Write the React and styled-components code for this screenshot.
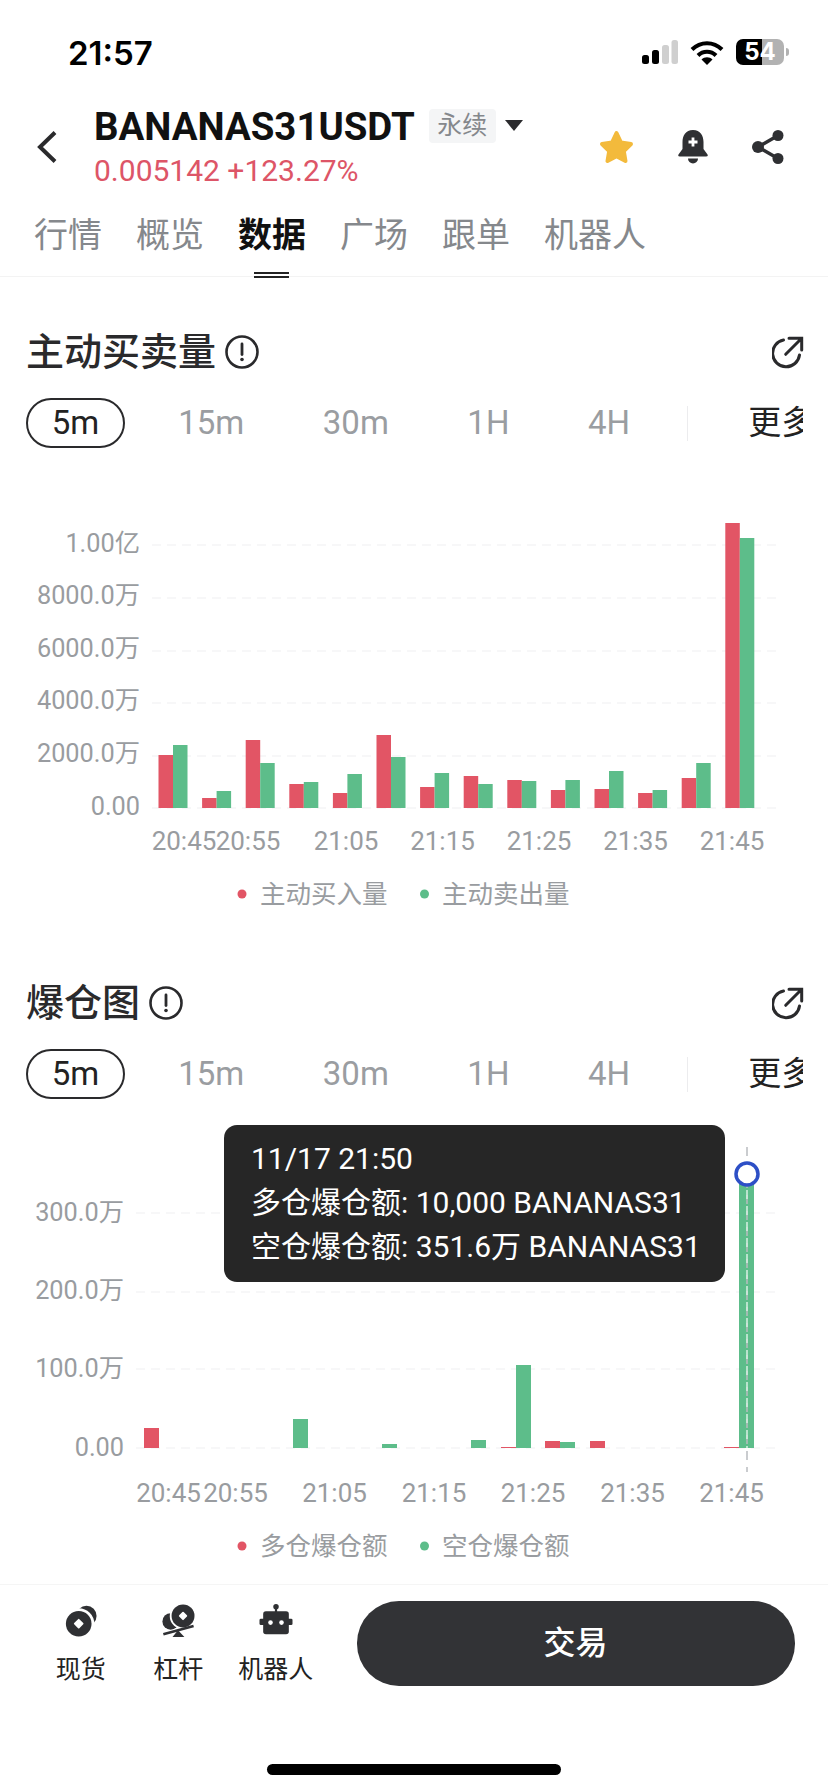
import React from 'react';
import styled, { createGlobalStyle } from 'styled-components';

const GlobalStyle = createGlobalStyle`
html, body {
  margin: 0;
  padding: 0;
  background: #fff;
  font-family: Roboto, "Noto Sans CJK SC", sans-serif;
}
`

const RED = '#e25565';
const GREEN = '#5dbd8a';

const Page = styled.div`
width: 828px;
height: 1792px;
overflow: hidden;
background: #fff;
`

const StatusBar = styled.div`
height: 104px;
display: flex;
align-items: center;
padding: 0 44px 0 68px;
box-sizing: border-box;
`

const Time = styled.div`
font-size: 33px;
font-weight: 600;
font-family: Inter, Roboto, sans-serif;
color: #000;
margin: 2px auto 0 0;
`

const StatusIcons = styled.div`
display: flex;
align-items: center;
gap: 12px;
`

const Battery = styled.div`
position: relative;
width: 48px;
height: 26px;
border-radius: 7px;
background: linear-gradient(90deg, #000 54%, #b2b2b2 54%);
color: #fff;
font: 700 24px/26px Inter, Roboto, sans-serif;
text-align: center;
&::after {
  content: "";
  position: absolute;
  right: -5px;
  top: 9px;
  width: 3px;
  height: 8px;
  border-radius: 0 3px 3px 0;
  background: #b2b2b2;
}
`

const Header = styled.div`
height: 104px;
display: flex;
align-items: flex-start;
padding: 0 44px 0 37px;
box-sizing: border-box;
`

const BackIcon = styled.svg`
margin: 27px 37px 0 0;
flex: none;
`

const TitleBlock = styled.div`
display: flex;
flex-direction: column;
`

const TitleRow = styled.div`
display: flex;
align-items: center;
height: 44px;
`

const Symbol = styled.div`
margin-top: 2px;
font-size: 38.4px;
font-weight: 700;
color: #111;
line-height: 44px;
`

const Tag = styled.div`
margin-left: 14px;
width: 67px;
height: 34px;
background: #f4f5f6;
border-radius: 4px;
color: #85888c;
font-size: 25px;
line-height: 34px;
text-align: center;
`

const Caret = styled.div`
margin: -2px 0 0 9px;
width: 0;
height: 0;
border-left: 9px solid transparent;
border-right: 9px solid transparent;
border-top: 11px solid #2b2b2e;
`

const Price = styled.div`
font-size: 30px;
line-height: 46px;
color: #dd5567;
`

const Actions = styled.div`
margin: 26px 0 0 auto;
display: flex;
align-items: center;
gap: 44px;
`

const Tabs = styled.div`
height: 68px;
display: flex;
gap: 34px;
padding-left: 34px;
box-sizing: content-box;
border-bottom: 1px solid #f3f3f3;
`

const Tab = styled.div`
position: relative;
height: 68px;
font-size: 34px;
line-height: 55px;
color: ${p => (p.$active ? '#111' : '#85888c')};
font-weight: ${p => (p.$active ? 700 : 400)};
&::after {
  content: "";
  display: ${p => (p.$active ? 'block' : 'none')};
  position: absolute;
  left: 16px;
  top: 64px;
  width: 35px;
  height: 2px;
  border-top: 2px solid #222;
  border-bottom: 2px solid #222;
}
`

const Section = styled.section`
height: ${p => p.$height}px;
box-sizing: border-box;
padding-top: 50px;
`

const SectionHead = styled.div`
height: 50px;
display: flex;
align-items: center;
padding: 0 24px 0 26px;
`

const SectionTitle = styled.h2`
margin: 0 9px 0 0;
font-size: 38px;
font-weight: 500;
line-height: 50px;
color: #2a2a2c;
`

const OpenIcon = styled.svg`
margin-left: auto;
`

const Periods = styled.div`
margin: 21px 25px 0 26px;
height: 50px;
display: flex;
align-items: center;
overflow: hidden;
`

const PeriodPill = styled.div`
flex: none;
width: 99px;
height: 50px;
box-sizing: border-box;
border: 2px solid #2a2a2c;
border-radius: 25px;
margin-right: 14px;
font-size: 33px;
line-height: 46px;
text-align: center;
color: #222;
`

const Period = styled.div`
flex: none;
padding: 0 39.25px;
font-size: 33px;
line-height: 50px;
color: #9a9da1;
`

const PeriodDivider = styled.div`
flex: none;
width: 1px;
height: 35px;
margin-left: 18px;
background: #ececee;
`

const PeriodMore = styled.div`
flex: none;
margin-left: 60px;
font-size: 33px;
line-height: 50px;
color: #222;
`

const ChartWrap = styled.div`
position: relative;
margin-top: 33px;
`

const ChartSvg = styled.svg`
display: block;
`

const AxisText = styled.text`
font-size: ${p => p.$size}px;
fill: #999ca0;
`

const Tooltip = styled.div`
position: absolute;
left: 224px;
top: -7px;
width: 501px;
height: 157px;
box-sizing: border-box;
padding: 12px 0 0 27px;
border-radius: 13px;
background: #262626;
color: #fff;
font-size: 30px;
line-height: 44px;
white-space: nowrap;
`

const BottomBar = styled.div`
height: 102px;
box-sizing: border-box;
padding: 16px 0 0 32px;
display: flex;
border-top: 1px solid #f5f5f5;
`

const NavItem = styled.div`
width: 97.5px;
display: flex;
flex-direction: column;
align-items: center;
padding-top: 3px;
`

const NavIcon = styled.svg`
display: block;
`

const NavLabel = styled.div`
margin-top: 17px;
font-size: 25px;
line-height: 32px;
color: #222;
white-space: nowrap;
`

const TradeButton = styled.div`
margin-left: 32px;
width: 438px;
height: 85px;
border-radius: 42px;
background: #323336;
color: #fff;
font-size: 32px;
font-weight: 500;
line-height: 85px;
text-align: center;
`

const HomeBar = styled.div`
width: 294px;
height: 11px;
margin: 78px auto 0;
border-radius: 6px;
background: #000;
`

// page y of each bar top, [red, green]
const flowBars = [
  [754, 744], [797, 790], [739, 762], [783, 781], [792, 773], [734, 756], [786, 772],
  [775, 783], [779, 780], [789, 779], [788, 770], [792, 789], [777, 762], [522, 537],
];
const flowTicks = [
  ['1.00亿', 542, 544], ['8000.0万', 594, 597], ['6000.0万', 647, 650],
  ['4000.0万', 699, 702], ['2000.0万', 752, 755], ['0.00', 805, 807],
];
const flowTimes = [[184, '20:45'], [248, '20:55'], [346, '21:05'], [442.5, '21:15'], [539, '21:25'], [635.5, '21:35'], [732, '21:45']];

const liqBars = [
  [144, 1428, RED], [293, 1419, GREEN], [382, 1444, GREEN], [471, 1440, GREEN], [501, 1447, RED],
  [516, 1365, GREEN], [545, 1441, RED], [560, 1442, GREEN], [590, 1441, RED], [724, 1447, RED], [739, 1183, GREEN],
];
const liqTicks = [['300.0万', 1212, 1213], ['200.0万', 1290, 1292], ['100.0万', 1368, 1369], ['0.00', 1447, 1448]];
const liqTimes = [[168.5, '20:45'], [235.5, '20:55'], [334.5, '21:05'], [434, '21:15'], [533, '21:25'], [632.5, '21:35'], [731.5, '21:45']];

function Grid({ ticks, x1, labelX }) {
  return ticks.map(([label, textY, lineY]) => (
    <g key={label}>
      <line x1={x1} x2={781} y1={lineY} y2={lineY} stroke="#f5f5f6" strokeWidth="1.5" strokeDasharray="9 6" />
      <AxisText $size={25.3} x={labelX} y={textY} textAnchor="end" dominantBaseline="central">{label}</AxisText>
    </g>
  ));
}

function Times({ items, y }) {
  return items.map(([x, label]) => (
    <AxisText $size={26} key={label} x={x} y={y} textAnchor="middle" dominantBaseline="central">{label}</AxisText>
  ));
}

function Legend({ y, left, right }) {
  return (
    <g>
      <circle cx={242} cy={y} r={4.5} fill={RED} />
      <AxisText $size={25.5} x={260} y={y} dominantBaseline="central">{left}</AxisText>
      <circle cx={424.5} cy={y} r={4.5} fill={GREEN} />
      <AxisText $size={25.5} x={442} y={y} dominantBaseline="central">{right}</AxisText>
    </g>
  );
}

function FlowChart() {
  return (
    <ChartSvg width="828" height="448" viewBox="0 480 828 448">
      <Grid ticks={flowTicks} x1={152} labelX={140} />
      {flowBars.map(([red, green], i) => {
        const x = 158.5 + i * 43.6;
        return (
          <g key={i}>
            <rect x={x} y={red} width={14.5} height={807 - red} fill={RED} />
            <rect x={x + 14.5} y={green} width={14.5} height={807 - green} fill={GREEN} />
          </g>
        );
      })}
      <Times items={flowTimes} y={840} />
      <Legend y={893} left="主动买入量" right="主动卖出量" />
    </ChartSvg>
  );
}

function LiquidationChart() {
  return (
    <ChartSvg width="828" height="452" viewBox="0 1132 828 452">
      <Grid ticks={liqTicks} x1={136} labelX={124} />
      {liqBars.map(([x, top, color]) => (
        <rect key={x} x={x} y={top} width={15} height={1448 - top} fill={color} />
      ))}
      <line x1={747} x2={747} y1={1147} y2={1472} stroke="#b9bcc0" strokeWidth="1.5" strokeDasharray="9 7" />
      <line x1={747} x2={747} y1={1190} y2={1448} stroke="#d8f0e3" strokeWidth="1.5" strokeDasharray="9 7" />
      <circle cx={747} cy={1174} r={11} fill="#fff" stroke="#2d4fc6" strokeWidth="3.5" />
      <Times items={liqTimes} y={1493} />
      <Legend y={1546} left="多仓爆仓额" right="空仓爆仓额" />
    </ChartSvg>
  );
}

function InfoIcon() {
  return (
    <svg width="34" height="34" viewBox="0 0 34 34">
      <circle cx="17" cy="17" r="15.5" fill="none" stroke="#2a2a2c" strokeWidth="2.6" />
      <line x1="17" y1="9" x2="17" y2="19.5" stroke="#2a2a2c" strokeWidth="2.8" strokeLinecap="round" />
      <circle cx="17" cy="24.5" r="1.8" fill="#2a2a2c" />
    </svg>
  );
}

function SectionHeader({ title }) {
  return (
    <SectionHead>
      <SectionTitle>{title}</SectionTitle>
      <InfoIcon />
      <OpenIcon width="32" height="34" viewBox="0 0 32 34" fill="none" stroke="#2a2a2c" strokeWidth="3" strokeLinecap="round">
        <path d="M11.5 5A13.500 13.500 0 1 0 27.500 20" />
        <path d="M13.700 19.300L29.700 3.300M17 3.300H29.700V15" />
      </OpenIcon>
    </SectionHead>
  );
}

function PeriodRow() {
  return (
    <Periods>
      <PeriodPill>5m</PeriodPill>
      <Period>15m</Period>
      <Period>30m</Period>
      <Period>1H</Period>
      <Period>4H</Period>
      <PeriodDivider />
      <PeriodMore>更多</PeriodMore>
    </Periods>
  );
}

export default function App() {
  return (
    <Page>
      <GlobalStyle />
      <StatusBar>
        <Time>21:57</Time>
        <StatusIcons>
          <svg width="36" height="24" viewBox="0 0 36 24">
            <rect x="0" y="15" width="7" height="9" rx="2.5" fill="#000" />
            <rect x="10" y="10" width="7" height="14" rx="2.5" fill="#000" />
            <rect x="20" y="5" width="7" height="19" rx="2.5" fill="#cfcfcf" />
            <rect x="29.500" y="0" width="6.500" height="24" rx="2.500" fill="#cfcfcf" />
          </svg>
          <svg width="34" height="25" viewBox="0 0 34 25" fill="none" stroke="#000" strokeWidth="4">
            <path d="M2 9.500C10.500 1 23.500 1 32 9.500" />
            <path d="M8 15.500C13 10.500 21 10.500 26 15.500" />
            <path d="M17 25L11.500 19.500C14.500 16.500 19.500 16.500 22.500 19.500Z" fill="#000" stroke="none" />
          </svg>
          <Battery>54</Battery>
        </StatusIcons>
      </StatusBar>

      <Header>
        <BackIcon width="20" height="32" viewBox="0 0 20 32" fill="none" stroke="#2a2a2c" strokeWidth="4">
          <path d="M18 1.500L3 16L18 30.500" />
        </BackIcon>
        <TitleBlock>
          <TitleRow>
            <Symbol>BANANAS31USDT</Symbol>
            <Tag>永续</Tag>
            <Caret />
          </TitleRow>
          <Price>0.005142 +123.27%</Price>
        </TitleBlock>
        <Actions>
          <svg width="35" height="34" viewBox="0 0 35 34">
            <path d="M17.500 3L22 12.500L32 14L24.800 21.200L26.500 31L17.500 26.300L8.500 31L10.200 21.200L3 14L13 12.500Z" fill="#f3ba3c" stroke="#f3ba3c" strokeWidth="4" strokeLinejoin="round" />
          </svg>
          <svg width="30" height="34" viewBox="0 0 30 34">
            <path d="M15 0C7.500 0 4.500 6 4.500 12V19L0.500 24.500Q-0.500 26.500 2 26.500H28Q30.500 26.500 29.500 24.500L25.500 19V12C25.500 6 22.500 0 15 0Z" fill="#2f3033" />
            <path d="M15 7.500V16.500M10.500 12H19.500" stroke="#fff" strokeWidth="2.800" />
            <path d="M10 28.500H20A5 5 0 0 1 10 28.500Z" fill="#2f3033" />
          </svg>
          <svg width="32" height="34" viewBox="0 0 32 34">
            <path d="M26 5.500L6 17L26 28.500" fill="none" stroke="#2f3033" strokeWidth="3.500" />
            <circle cx="26" cy="5.500" r="5.500" fill="#2f3033" />
            <circle cx="6" cy="17" r="6" fill="#2f3033" />
            <circle cx="26" cy="28.500" r="5.500" fill="#2f3033" />
          </svg>
        </Actions>
      </Header>

      <Tabs>
        <Tab>行情</Tab>
        <Tab>概览</Tab>
        <Tab $active>数据</Tab>
        <Tab>广场</Tab>
        <Tab>跟单</Tab>
        <Tab>机器人</Tab>
      </Tabs>

      <Section $height={651}>
        <SectionHeader title="主动买卖量" />
        <PeriodRow />
        <ChartWrap>
          <FlowChart />
        </ChartWrap>
      </Section>

      <Section $height={656}>
        <SectionHeader title="爆仓图" />
        <PeriodRow />
        <ChartWrap>
          <LiquidationChart />
          <Tooltip>
            <div>11/17 21:50</div>
            <div>多仓爆仓额: 10,000 BANANAS31</div>
            <div>空仓爆仓额: 351.6万 BANANAS31</div>
          </Tooltip>
        </ChartWrap>
      </Section>

      <BottomBar>
        <NavItem>
          <NavIcon width="36" height="36" viewBox="0 0 36 36">
            <circle cx="24" cy="13" r="11" fill="#2f3033" />
            <circle cx="15.500" cy="21.500" r="17" fill="#fff" />
            <circle cx="15.500" cy="21.500" r="14" fill="#2f3033" />
            <rect x="11.500" y="17.500" width="8" height="8" rx="1" fill="#fff" transform="rotate(45 15.500 21.500)" />
          </NavIcon>
          <NavLabel>现货</NavLabel>
        </NavItem>
        <NavItem>
          <NavIcon width="36" height="36" viewBox="0 0 36 36">
            <circle cx="10" cy="19" r="9" fill="#2f3033" />
            <circle cx="23.500" cy="13" r="14.500" fill="#fff" />
            <circle cx="23.500" cy="13" r="12.500" fill="#2f3033" />
            <rect x="20" y="9.500" width="7" height="7" rx="1" fill="#fff" transform="rotate(45 23.500 13)" />
            <line x1="2" y1="33" x2="35" y2="24" stroke="#2f3033" strokeWidth="3" />
            <path d="M18 28.500L25 36H12Z" fill="#2f3033" />
          </NavIcon>
          <NavLabel>杠杆</NavLabel>
        </NavItem>
        <NavItem>
          <NavIcon width="36" height="36" viewBox="0 0 36 36">
            <circle cx="18" cy="3" r="3" fill="#2f3033" />
            <rect x="16.800" y="4" width="2.400" height="6" fill="#2f3033" />
            <rect x="4" y="8" width="28" height="25" rx="3" fill="#2f3033" />
            <rect x="0" y="16" width="36" height="7" rx="1.500" fill="#2f3033" />
            <circle cx="12" cy="20.300" r="2.500" fill="#fff" />
            <circle cx="24" cy="20.300" r="2.500" fill="#fff" />
          </NavIcon>
          <NavLabel>机器人</NavLabel>
        </NavItem>
        <TradeButton>交易</TradeButton>
      </BottomBar>
      <HomeBar />
    </Page>
  );
}
